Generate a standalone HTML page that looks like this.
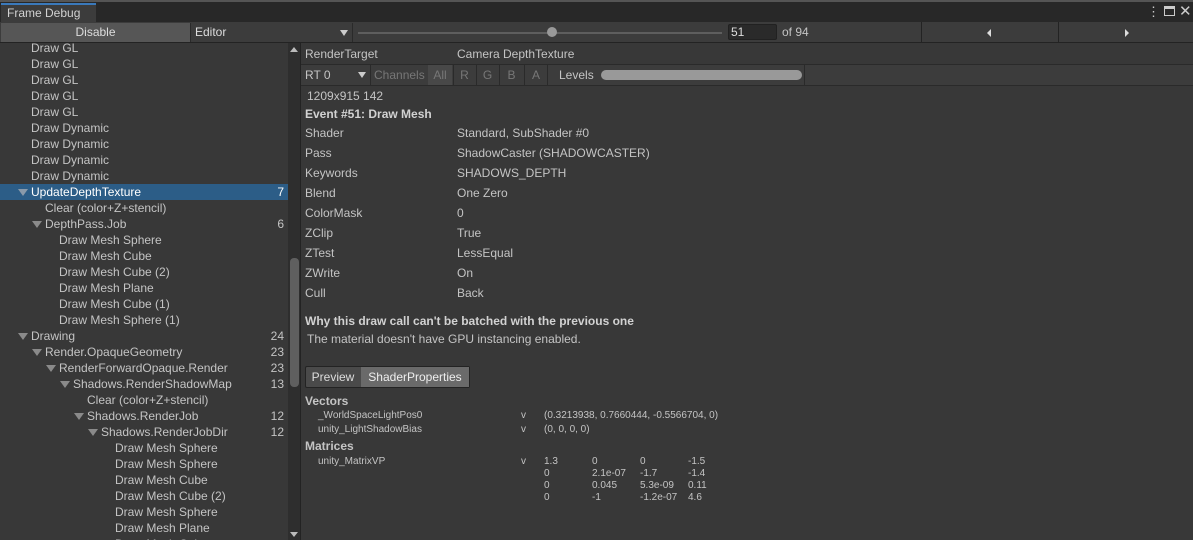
<!DOCTYPE html><html><head><style>
*{margin:0;padding:0;box-sizing:border-box}
body{width:1193px;height:540px;background:#383838;font-family:"Liberation Sans",sans-serif;font-size:12px;color:#c4c4c4;position:relative;overflow:hidden}
.a{position:absolute;white-space:nowrap}
.r{position:absolute;height:16px;line-height:16px;white-space:nowrap}
.tri{position:absolute;width:0;height:0;border-left:5px solid transparent;border-right:5px solid transparent;border-top:7px solid #8a8a8a}
.n{position:absolute;right:4px}
.p{position:absolute;line-height:20px;white-space:nowrap}
.s{font-size:10px}
</style></head><body>
<div class="a" style="left:0;top:0;width:1193px;height:2px;background:#555"></div>
<div class="a" style="left:0;top:2px;width:1193px;height:20px;background:#282828"></div>
<div class="a" style="left:1px;top:3px;width:95px;height:19px;background:#3c3c3c;border-top:2px solid #3a79bb;line-height:17px;padding-left:6px;color:#d2d2d2">Frame Debug</div>
<div class="a" style="left:1147px;top:4px;color:#ccc;font-size:13px">⋮</div>
<div class="a" style="left:1164px;top:6px;width:11px;height:10px;border:1px solid #ccc;border-top-width:3px"></div>
<div class="a" style="left:1179px;top:2px;font-size:15px;color:#ccc">✕</div>
<div class="a" style="left:0;top:22px;width:1193px;height:21px;background:#3c3c3c;border-bottom:1px solid #232323"></div>
<div class="a" style="left:1px;top:23px;width:189px;height:19px;background:#565656;text-align:center;line-height:19px;color:#ddd">Disable</div>
<div class="a" style="left:190px;top:23px;width:1px;height:19px;background:#2a2a2a"></div>
<div class="a" style="left:195px;top:23px;line-height:19px;color:#ddd">Editor</div>
<div class="tri" style="left:340px;top:30px;border-top-color:#ccc;border-width:6px 4px 0"></div>
<div class="a" style="left:352px;top:23px;width:1px;height:19px;background:#2a2a2a"></div>
<div class="a" style="left:358px;top:32px;width:364px;height:2px;background:#5e5e5e"></div>
<div class="a" style="left:547px;top:27px;width:10px;height:10px;border-radius:50%;background:#999"></div>
<div class="a" style="left:728px;top:24px;width:49px;height:16px;background:#2a2a2a;border:1px solid #212121;border-radius:2px;line-height:14px;padding-left:2px;color:#ddd">51</div>
<div class="a" style="left:782px;top:24px;line-height:17px">of 94</div>
<div class="a" style="left:921px;top:22px;width:1px;height:20px;background:#232323"></div>
<div class="a" style="left:1058px;top:22px;width:1px;height:20px;background:#232323"></div>
<div class="a" style="left:987px;top:29px;border-top:4px solid transparent;border-bottom:4px solid transparent;border-right:4px solid #ddd"></div>
<div class="a" style="left:1125px;top:29px;border-top:4px solid transparent;border-bottom:4px solid transparent;border-left:4px solid #ddd"></div>

<div class="a" style="left:0;top:43px;width:288px;height:497px;overflow:hidden">
<div style="position:absolute;left:0;top:-3px;width:288px">
<div class="r" style="top:0;left:31px">Draw GL</div>
<div class="r" style="top:16px;left:31px">Draw GL</div>
<div class="r" style="top:32px;left:31px">Draw GL</div>
<div class="r" style="top:48px;left:31px">Draw GL</div>
<div class="r" style="top:64px;left:31px">Draw GL</div>
<div class="r" style="top:80px;left:31px">Draw Dynamic</div>
<div class="r" style="top:96px;left:31px">Draw Dynamic</div>
<div class="r" style="top:112px;left:31px">Draw Dynamic</div>
<div class="r" style="top:128px;left:31px">Draw Dynamic</div>
<div class="r" style="top:144px;left:0;width:288px;background:#2c5d87;color:#fff"><div class="tri" style="left:18px;top:5px;border-top-color:#8a9aaa"></div><span style="position:absolute;left:31px">UpdateDepthTexture</span><span class="n" style="right:4px">7</span></div>
<div class="r" style="top:160px;left:45px">Clear (color+Z+stencil)</div>
<div class="r" style="top:176px;left:0;width:288px"><div class="tri" style="left:32px;top:5px"></div><span style="position:absolute;left:45px">DepthPass.Job</span><span class="n">6</span></div>
<div class="r" style="top:192px;left:59px">Draw Mesh Sphere</div>
<div class="r" style="top:208px;left:59px">Draw Mesh Cube</div>
<div class="r" style="top:224px;left:59px">Draw Mesh Cube (2)</div>
<div class="r" style="top:240px;left:59px">Draw Mesh Plane</div>
<div class="r" style="top:256px;left:59px">Draw Mesh Cube (1)</div>
<div class="r" style="top:272px;left:59px">Draw Mesh Sphere (1)</div>
<div class="r" style="top:288px;left:0;width:288px"><div class="tri" style="left:18px;top:5px"></div><span style="position:absolute;left:31px">Drawing</span><span class="n">24</span></div>
<div class="r" style="top:304px;left:0;width:288px"><div class="tri" style="left:32px;top:5px"></div><span style="position:absolute;left:45px">Render.OpaqueGeometry</span><span class="n">23</span></div>
<div class="r" style="top:320px;left:0;width:288px"><div class="tri" style="left:46px;top:5px"></div><span style="position:absolute;left:59px">RenderForwardOpaque.Render</span><span class="n">23</span></div>
<div class="r" style="top:336px;left:0;width:288px"><div class="tri" style="left:60px;top:5px"></div><span style="position:absolute;left:73px">Shadows.RenderShadowMap</span><span class="n">13</span></div>
<div class="r" style="top:352px;left:87px">Clear (color+Z+stencil)</div>
<div class="r" style="top:368px;left:0;width:288px"><div class="tri" style="left:74px;top:5px"></div><span style="position:absolute;left:87px">Shadows.RenderJob</span><span class="n">12</span></div>
<div class="r" style="top:384px;left:0;width:288px"><div class="tri" style="left:88px;top:5px"></div><span style="position:absolute;left:101px">Shadows.RenderJobDir</span><span class="n">12</span></div>
<div class="r" style="top:400px;left:115px">Draw Mesh Sphere</div>
<div class="r" style="top:416px;left:115px">Draw Mesh Sphere</div>
<div class="r" style="top:432px;left:115px">Draw Mesh Cube</div>
<div class="r" style="top:448px;left:115px">Draw Mesh Cube (2)</div>
<div class="r" style="top:464px;left:115px">Draw Mesh Sphere</div>
<div class="r" style="top:480px;left:115px">Draw Mesh Plane</div>
<div class="r" style="top:496px;left:115px">Draw Mesh Cube</div>
</div></div>
<div class="a" style="left:288px;top:43px;width:12px;height:497px;background:#2e2e2e"></div>
<div class="a" style="left:290px;top:258px;width:9px;height:129px;background:#5f5f5f;border-radius:4px"></div>
<div class="a" style="left:290px;top:47px;border-left:4px solid transparent;border-right:4px solid transparent;border-bottom:5px solid #bbb"></div>
<div class="a" style="left:290px;top:532px;border-left:4px solid transparent;border-right:4px solid transparent;border-top:5px solid #bbb"></div>
<div class="a" style="left:300px;top:43px;width:1px;height:497px;background:#232323"></div>

<div class="a" style="left:305px;top:44px;line-height:20px">RenderTarget</div>
<div class="a" style="left:457px;top:44px;line-height:20px">Camera DepthTexture</div>
<div class="a" style="left:301px;top:64px;width:892px;height:22px;background:#3c3c3c;border-top:1px solid #2a2a2a;border-bottom:1px solid #2a2a2a"></div>
<div class="a" style="left:305px;top:65px;line-height:20px">RT 0</div>
<div class="tri" style="left:358px;top:72px;border-top-color:#ccc;border-width:6px 4px 0"></div>
<div class="a" style="left:370px;top:65px;width:1px;height:20px;background:#2a2a2a"></div>
<div class="a" style="left:374px;top:65px;line-height:20px;color:#777">Channels</div>
<div class="a" style="left:428px;top:65px;width:24px;height:20px;background:#484848;color:#777;text-align:center;line-height:20px">All</div>
<div class="a" style="left:453px;top:65px;width:22px;line-height:20px;color:#777;text-align:center;border-left:1px solid #2a2a2a">R</div>
<div class="a" style="left:476px;top:65px;width:22px;line-height:20px;color:#777;text-align:center;border-left:1px solid #2a2a2a">G</div>
<div class="a" style="left:499px;top:65px;width:24px;line-height:20px;color:#777;text-align:center;border-left:1px solid #2a2a2a">B</div>
<div class="a" style="left:524px;top:65px;width:24px;line-height:20px;color:#777;text-align:center;border-left:1px solid #2a2a2a;border-right:1px solid #2a2a2a">A</div>
<div class="a" style="left:559px;top:65px;line-height:20px">Levels</div>
<div class="a" style="left:601px;top:70px;width:201px;height:10px;background:#999;border-radius:5px"></div>
<div class="a" style="left:804px;top:65px;width:1px;height:20px;background:#2a2a2a"></div>
<div class="a" style="left:307px;top:86px;line-height:20px">1209x915 142</div>
<div class="a" style="left:305px;top:104px;line-height:20px;font-weight:bold;color:#d2d2d2">Event #51: Draw Mesh</div>
<div class="p" style="left:305px;top:123px">Shader</div><div class="p" style="left:457px;top:123px">Standard, SubShader #0</div>
<div class="p" style="left:305px;top:143px">Pass</div><div class="p" style="left:457px;top:143px">ShadowCaster (SHADOWCASTER)</div>
<div class="p" style="left:305px;top:163px">Keywords</div><div class="p" style="left:457px;top:163px">SHADOWS_DEPTH</div>
<div class="p" style="left:305px;top:183px">Blend</div><div class="p" style="left:457px;top:183px">One Zero</div>
<div class="p" style="left:305px;top:203px">ColorMask</div><div class="p" style="left:457px;top:203px">0</div>
<div class="p" style="left:305px;top:223px">ZClip</div><div class="p" style="left:457px;top:223px">True</div>
<div class="p" style="left:305px;top:243px">ZTest</div><div class="p" style="left:457px;top:243px">LessEqual</div>
<div class="p" style="left:305px;top:263px">ZWrite</div><div class="p" style="left:457px;top:263px">On</div>
<div class="p" style="left:305px;top:283px">Cull</div><div class="p" style="left:457px;top:283px">Back</div>
<div class="p" style="left:305px;top:311px;font-weight:bold;color:#d2d2d2">Why this draw call can't be batched with the previous one</div>
<div class="p" style="left:307px;top:329px">The material doesn't have GPU instancing enabled.</div>
<div class="a" style="left:305px;top:366px;width:165px;height:22px;border:1px solid #232323;border-radius:2px;background:#4a4a4a"></div>
<div class="a" style="left:306px;top:367px;width:54px;height:20px;line-height:20px;text-align:center;color:#ddd">Preview</div>
<div class="a" style="left:361px;top:367px;width:108px;height:20px;background:#6a6a6a;line-height:20px;text-align:center;color:#eee">ShaderProperties</div>
<div class="a" style="left:305px;top:393px;font-weight:bold;line-height:16px">Vectors</div>
<div class="a s" style="left:318px;top:410px">_WorldSpaceLightPos0</div>
<div class="a s" style="left:521px;top:410px">v</div>
<div class="a s" style="left:544px;top:410px">(0.3213938, 0.7660444, -0.5566704, 0)</div>
<div class="a s" style="left:318px;top:424px">unity_LightShadowBias</div>
<div class="a s" style="left:521px;top:424px">v</div>
<div class="a s" style="left:544px;top:424px">(0, 0, 0, 0)</div>
<div class="a" style="left:305px;top:438px;font-weight:bold;line-height:16px">Matrices</div>
<div class="a s" style="left:318px;top:456px">unity_MatrixVP</div>
<div class="a s" style="left:521px;top:456px">v</div>
<div class="a s" style="left:544px;top:456px;line-height:12px">1.3<br>0<br>0<br>0</div>
<div class="a s" style="left:592px;top:456px;line-height:12px">0<br>2.1e-07<br>0.045<br>-1</div>
<div class="a s" style="left:640px;top:456px;line-height:12px">0<br>-1.7<br>5.3e-09<br>-1.2e-07</div>
<div class="a s" style="left:688px;top:456px;line-height:12px">-1.5<br>-1.4<br>0.11<br>4.6</div>
</body></html>
